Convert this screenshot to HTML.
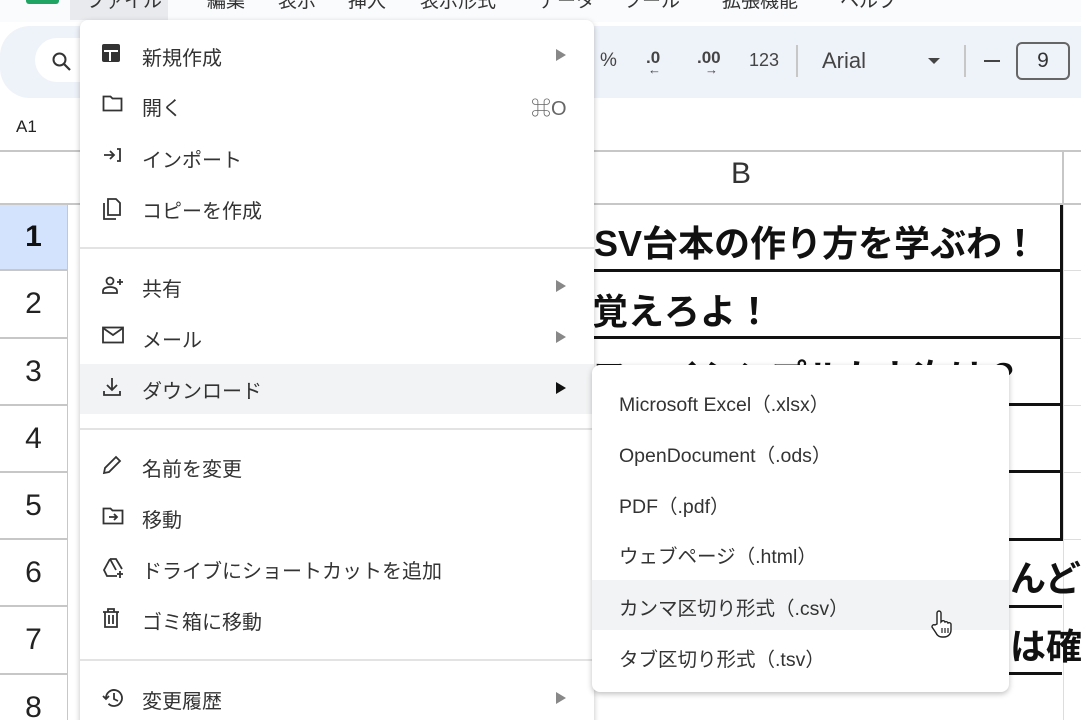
<!DOCTYPE html>
<html><head><meta charset="utf-8"><style>
*{margin:0;padding:0;box-sizing:border-box}
html,body{width:1081px;height:720px;overflow:hidden}
body{position:relative;background:#fff;font-family:"Liberation Sans","Noto Sans CJK JP",sans-serif;color:#202124}
.a{position:absolute}
.menubar{left:0;top:0;width:1081px;height:22px;background:#f9fbfd}
.mb{top:-14px;font-size:19px;color:#333;white-space:nowrap}
.tb{left:0;top:26px;width:1081px;height:72px;background:#eef2f9;border-radius:30px 0 0 30px}
.rh{left:0;width:68px;background:#fff;border-bottom:2px solid #c7c7c7;border-right:1px solid #c7c7c7;font-size:30px;text-align:center;color:#222}
.cell{font-weight:bold;font-size:36px;white-space:nowrap;color:#111}
.menu{left:80px;top:20px;width:514px;height:710px;background:#fff;box-shadow:0 2px 6px rgba(0,0,0,.25);border-radius:8px 8px 0 0}
.it{left:0;width:514px;height:50px;font-size:20px;color:#333}
.it span.t{position:absolute;left:62px;top:11px;white-space:nowrap}
.it .ar{position:absolute;left:476px;top:18px;width:0;height:0;border-left:10px solid #888;border-top:6px solid transparent;border-bottom:6px solid transparent}
.it svg{position:absolute;left:22px;top:13px}
.sep{left:0;width:514px;height:2px;background:#e3e3e3}
.sub{left:592px;top:365px;width:417px;height:327px;background:#fff;box-shadow:0 2px 6px rgba(0,0,0,.25);border-radius:8px}
.si{left:0;width:417px;height:50px;font-size:19.5px;color:#333;white-space:nowrap}
.si span{position:absolute;left:27px;top:12px}
</style></head><body>
<div class="a menubar"></div>
<div class="a" style="left:26px;top:0;width:33px;height:4px;background:#1fa463;border-radius:0 0 3px 3px"></div>
<div class="a" style="left:70px;top:0;width:98px;height:20px;background:#e8eaed"></div>
<div class="a mb" style="left:86px">ファイル</div>
<div class="a mb" style="left:207px">編集</div>
<div class="a mb" style="left:278px">表示</div>
<div class="a mb" style="left:348px">挿入</div>
<div class="a mb" style="left:420px">表示形式</div>
<div class="a mb" style="left:538px">データ</div>
<div class="a mb" style="left:623px">ツール</div>
<div class="a mb" style="left:722px">拡張機能</div>
<div class="a mb" style="left:840px">ヘルプ</div>

<div class="a tb"></div>
<div class="a" style="left:35px;top:38px;width:120px;height:44px;background:#fff;border-radius:22px"></div>
<svg class="a" style="left:50px;top:50px" width="24" height="24" viewBox="0 0 24 24"><circle cx="9.5" cy="9.5" r="6" fill="none" stroke="#333" stroke-width="2"/><path d="M14 14l6 6" stroke="#333" stroke-width="2.2"/></svg>
<div class="a" style="left:600px;top:50px;font-size:19px;color:#444">%</div>
<div class="a" style="left:646px;top:48px;font-size:17px;color:#444;font-weight:bold">.0</div>
<div class="a" style="left:648px;top:62px;font-size:13px;color:#444">←</div>
<div class="a" style="left:697px;top:48px;font-size:17px;color:#444;font-weight:bold">.00</div>
<div class="a" style="left:705px;top:62px;font-size:13px;color:#444">→</div>
<div class="a" style="left:749px;top:50px;font-size:18px;color:#444">123</div>
<div class="a" style="left:796px;top:45px;width:2px;height:32px;background:#c7c7c7"></div>
<div class="a" style="left:822px;top:48px;font-size:22px;color:#444">Arial</div>
<div class="a" style="left:928px;top:58px;border-top:6px solid #444;border-left:6px solid transparent;border-right:6px solid transparent"></div>
<div class="a" style="left:964px;top:45px;width:2px;height:32px;background:#c7c7c7"></div>
<div class="a" style="left:984px;top:60px;width:16px;height:2px;background:#444"></div>
<div class="a" style="left:1016px;top:42px;width:54px;height:38px;border:2px solid #666;border-radius:6px;font-size:21px;text-align:center;line-height:33px;color:#333">9</div>

<div class="a" style="left:16px;top:117px;font-size:17px;color:#222">A1</div>
<div class="a" style="left:0;top:150px;width:1081px;height:2px;background:#c7c7c7"></div>
<div class="a" style="left:0;top:152px;width:1081px;height:53px;background:#fff;border-bottom:2px solid #c7c7c7"></div>
<div class="a" style="left:1062px;top:152px;width:2px;height:53px;background:#c7c7c7"></div>
<div class="a" style="left:731px;top:157px;font-size:30px;color:#333">B</div>

<div class="a rh" style="top:205px;height:66px;background:#d3e3fd;font-weight:bold;line-height:64px;color:#111">1</div>
<div class="a rh" style="top:271px;height:68px;line-height:66px">2</div>
<div class="a rh" style="top:339px;height:67px;line-height:65px">3</div>
<div class="a rh" style="top:406px;height:67px;line-height:65px">4</div>
<div class="a rh" style="top:473px;height:67px;line-height:65px">5</div>
<div class="a rh" style="top:540px;height:67px;line-height:65px">6</div>
<div class="a rh" style="top:607px;height:68px;line-height:66px">7</div>
<div class="a rh" style="top:675px;height:68px;line-height:66px">8</div>

<div class="a" style="left:1063px;top:205px;width:1px;height:515px;background:#ddd"></div>
<div class="a" style="left:1064px;top:270px;width:17px;height:1px;background:#ddd"></div>
<div class="a" style="left:1064px;top:338px;width:17px;height:1px;background:#ddd"></div>
<div class="a" style="left:1064px;top:405px;width:17px;height:1px;background:#ddd"></div>
<div class="a" style="left:1064px;top:472px;width:17px;height:1px;background:#ddd"></div>
<div class="a" style="left:1064px;top:539px;width:17px;height:1px;background:#ddd"></div>
<div class="a cell" style="left:568px;top:215px">CSV台本の作り方を学ぶわ！</div>
<div class="a cell" style="left:592px;top:283px">覚えろよ！</div>
<div class="a cell" style="left:592px;top:349px">ファイシンプルかよ次は？</div>
<div class="a cell" style="left:1010px;top:550px">んど</div>
<div class="a cell" style="left:1010px;top:618px">は確</div>
<div class="a" style="left:1060px;top:205px;width:3px;height:335px;background:#111"></div>
<div class="a" style="left:580px;top:269px;width:483px;height:3px;background:#111"></div>
<div class="a" style="left:580px;top:336px;width:483px;height:3px;background:#111"></div>
<div class="a" style="left:580px;top:403px;width:483px;height:3px;background:#111"></div>
<div class="a" style="left:580px;top:470px;width:483px;height:3px;background:#111"></div>
<div class="a" style="left:580px;top:538px;width:483px;height:3px;background:#111"></div>
<div class="a" style="left:1008px;top:605px;width:54px;height:3px;background:#111"></div>
<div class="a" style="left:1008px;top:672px;width:54px;height:3px;background:#111"></div>

<div class="a menu">
 <div class="a it" style="top:11px"><svg width="18" height="18" viewBox="0 0 18 18"><rect x="0" y="0" width="18" height="18" rx="2" fill="#333"/><path d="M2 7h14M8 7v10" stroke="#fff" stroke-width="2"/></svg><span class="t">新規作成</span><i class="ar"></i></div>
 <div class="a it" style="top:61px"><svg width="22" height="18" viewBox="0 0 22 18"><path d="M1.5 2.5h7l2 2h9v12h-18z" fill="none" stroke="#333" stroke-width="1.8"/></svg><span class="t">開く</span><span class="a" style="left:451px;top:11px;color:#666">⌘O</span></div>
 <div class="a it" style="top:113px"><svg width="20" height="18" viewBox="0 0 20 18"><path d="M2 9h10M8 5l4 4-4 4M15 3h3v12h-3" fill="none" stroke="#333" stroke-width="1.8"/></svg><span class="t">インポート</span></div>
 <div class="a it" style="top:164px"><svg width="20" height="24" viewBox="0 0 20 24"><path d="M6 2h8l4 4v12H6z M2 6v16h12" fill="none" stroke="#333" stroke-width="1.8"/></svg><span class="t">コピーを作成</span></div>
 <div class="a sep" style="top:227px"></div>
 <div class="a it" style="top:242px"><svg width="24" height="20" viewBox="0 0 24 20"><circle cx="8" cy="6" r="3.5" fill="none" stroke="#333" stroke-width="1.8"/><path d="M1 18v-2c0-3 4-4 7-4s7 1 7 4v2z M18 4v6M15 7h6" fill="none" stroke="#333" stroke-width="1.8"/></svg><span class="t">共有</span><i class="ar"></i></div>
 <div class="a it" style="top:293px"><svg width="22" height="18" viewBox="0 0 22 18"><rect x="1" y="1.5" width="20" height="15" fill="none" stroke="#333" stroke-width="1.8"/><path d="M1 2l10 7 10-7" fill="none" stroke="#333" stroke-width="1.8"/></svg><span class="t">メール</span><i class="ar"></i></div>
 <div class="a it" style="top:344px;background:#f1f3f4"><svg width="20" height="20" viewBox="0 0 20 20"><path d="M10 1v11M5 8l5 5 5-5M2 14v4h16v-4" fill="none" stroke="#333" stroke-width="1.8"/></svg><span class="t">ダウンロード</span><i class="ar" style="border-left-color:#111"></i></div>
 <div class="a sep" style="top:408px"></div>
 <div class="a it" style="top:422px"><svg width="20" height="20" viewBox="0 0 20 20"><path d="M2 18l1-5L14 2l4 4L7 17z" fill="none" stroke="#333" stroke-width="1.8"/></svg><span class="t">名前を変更</span></div>
 <div class="a it" style="top:473px"><svg width="22" height="20" viewBox="0 0 22 20"><path d="M1.5 2.5h7l2 2h10v13h-19z M7 11h8M12 8l3 3-3 3" fill="none" stroke="#333" stroke-width="1.8"/></svg><span class="t">移動</span></div>
 <div class="a it" style="top:524px"><svg width="24" height="22" viewBox="0 0 24 22"><path d="M8 2h6l6 10M8 2L2 13l3 6h10M8 2l6 11M18 14v7M15 17h6" fill="none" stroke="#333" stroke-width="1.8"/></svg><span class="t">ドライブにショートカットを追加</span></div>
 <div class="a it" style="top:575px"><svg width="18" height="20" viewBox="0 0 18 20"><path d="M1 4h16M6 4V1h6v3M3 4v15h12V4M7 7v9M11 7v9" fill="none" stroke="#333" stroke-width="1.8"/></svg><span class="t">ゴミ箱に移動</span></div>
 <div class="a sep" style="top:639px"></div>
 <div class="a it" style="top:654px"><svg width="22" height="22" viewBox="0 0 22 22"><path d="M4 11a8 8 0 1 1 2.5 5.8M1 9l3 3 3-3M12 6v6l4 2" fill="none" stroke="#333" stroke-width="1.8"/></svg><span class="t">変更履歴</span><i class="ar"></i></div>
</div>

<div class="a sub">
 <div class="a si" style="top:11px"><span>Microsoft Excel（.xlsx）</span></div>
 <div class="a si" style="top:62px"><span>OpenDocument（.ods）</span></div>
 <div class="a si" style="top:113px"><span>PDF（.pdf）</span></div>
 <div class="a si" style="top:163px"><span>ウェブページ（.html）</span></div>
 <div class="a si" style="top:215px;background:#f1f3f4"><span>カンマ区切り形式（.csv）</span></div>
 <div class="a si" style="top:266px"><span>タブ区切り形式（.tsv）</span></div>
</div>
<svg class="a" style="left:930px;top:610px" width="26" height="28" viewBox="0 0 26 28"><path d="M7 14V3a2 2 0 0 1 4 0v9l1-1a2 2 0 0 1 3 1 2 2 0 0 1 3 1 2 2 0 0 1 3 1v6c0 4-3 7-7 7h-2c-3 0-5-2-6-4l-4-6a2 2 0 0 1 3-2z" fill="#fff" stroke="#222" stroke-width="1.4"/><path d="M12 18v5M15 18v5M18 18v5" stroke="#222" stroke-width="1.2"/></svg>
</body></html>
